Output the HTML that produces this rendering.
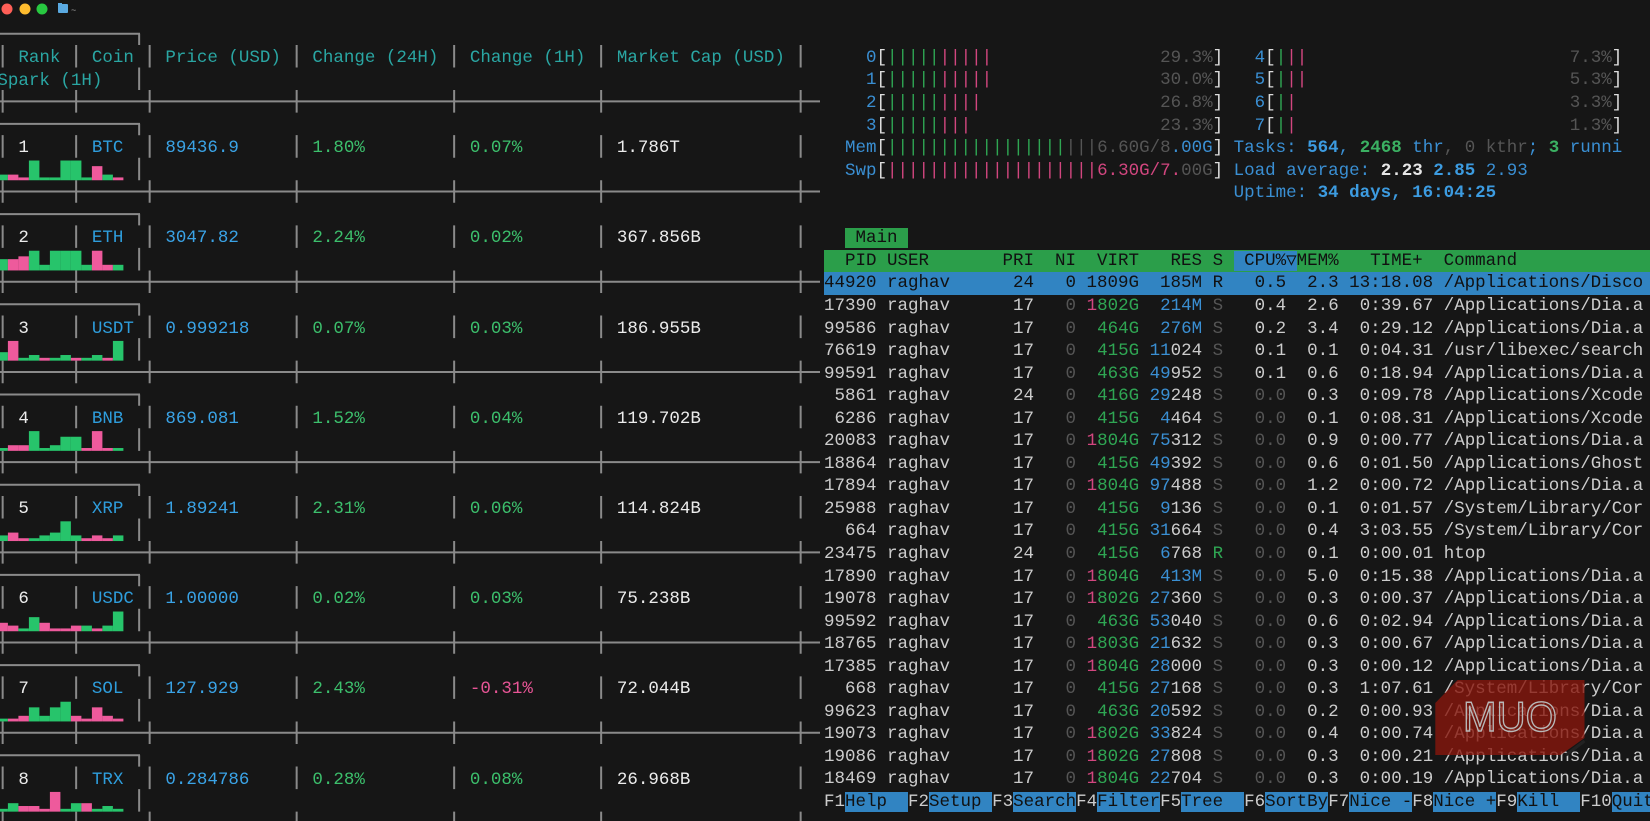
<!DOCTYPE html>
<html><head><meta charset="utf-8"><style>
*{margin:0;padding:0}
body{width:1650px;height:821px;background:#161616;overflow:hidden;position:relative;font-family:"Liberation Mono","DejaVu Sans Mono",monospace;font-size:17.5px}
.a{position:absolute;white-space:pre;line-height:22.55px;height:22.55px;transform:translateY(2px)}
.th{color:#2aa6a3}.cn{color:#2e9ddc}.pr{color:#3aa3e6}.gr{color:#3cbf6c}.rd{color:#e85596}.wh{color:#ececec}
#ht{position:absolute;left:824px;top:24.4px;width:826px;overflow:hidden;color:#cccccc}
#ht div{white-space:pre;height:22.55px;line-height:22.55px}
.g{color:#2fa653}.p{color:#d2467f}.b{color:#3a8fd3}.d{color:#555}.w{color:#e6e6e6}.k{color:#dcdcdc}
.bb{color:#3c9be0;font-weight:bold}.gb{color:#3bb062;font-weight:bold}
.hd{background:#2b9e4a;color:#111}
.hl{background:#3184c2}
.sel{background:#3184c2;color:#111}
.tab{background:#2b9e4a;color:#111}
.fk{background:#3184c2;color:#111}
</style></head><body>
<svg style="position:absolute;left:0;top:0" width="120" height="20">
<circle cx="7" cy="9" r="5.5" fill="#ff5f57"/><circle cx="25" cy="9" r="5.5" fill="#febc2e"/><circle cx="42" cy="9" r="5.5" fill="#28c840"/>
<rect x="58" y="4" width="10" height="9" rx="1" fill="#5aa9e0"/><rect x="58" y="3" width="4" height="2" fill="#5aa9e0"/>
<text x="71" y="13" font-size="9" fill="#999" font-family="Liberation Sans">~</text>
</svg>

<svg style="position:absolute;left:0;top:0" width="822" height="821">
<defs>
<g id="blk" stroke="#8a8a8a" stroke-width="2" fill="none">
<path d="M0 33.7H140M139.15 33.7v11.3M2.65 44.95v22.55M76.15 44.95v22.55M149.65 44.95v22.55M296.65 44.95v22.55M454.15 44.95v22.55M601.15 44.95v22.55M800.65 44.95v22.55M139.15 67.5v22.55M0 101.35H820M2.65 90.05v22.55M76.15 90.05v22.55M149.65 90.05v22.55M296.65 90.05v22.55M454.15 90.05v22.55M601.15 90.05v22.55M800.65 90.05v22.55"/>
</g>
</defs>
<use href="#blk"/>
<use href="#blk" transform="translate(0,90.2)"/>
<use href="#blk" transform="translate(0,180.4)"/>
<use href="#blk" transform="translate(0,270.6)"/>
<use href="#blk" transform="translate(0,360.8)"/>
<use href="#blk" transform="translate(0,451)"/>
<use href="#blk" transform="translate(0,541.2)"/>
<use href="#blk" transform="translate(0,631.4)"/>
<use href="#blk" transform="translate(0,721.6)"/>
<g>
<g transform="translate(0,180.25)">
<rect x="-2.6" y="-5.64" width="10.5" height="5.64" fill="#27c46b"/><rect x="7.9" y="-5.64" width="10.5" height="5.64" fill="#ee5a9c"/><rect x="18.4" y="-2.82" width="10.5" height="2.82" fill="#ee5a9c"/><rect x="28.9" y="-19.73" width="10.5" height="19.73" fill="#27c46b"/><rect x="39.4" y="-2.82" width="10.5" height="2.82" fill="#27c46b"/><rect x="49.9" y="-2.82" width="10.5" height="2.82" fill="#27c46b"/><rect x="60.4" y="-19.73" width="10.5" height="19.73" fill="#27c46b"/><rect x="70.9" y="-19.73" width="10.5" height="19.73" fill="#27c46b"/><rect x="81.4" y="-2.82" width="10.5" height="2.82" fill="#27c46b"/><rect x="91.9" y="-14.1" width="10.5" height="14.1" fill="#ee5a9c"/><rect x="102.4" y="-5.64" width="10.5" height="5.64" fill="#27c46b"/><rect x="112.9" y="-2.82" width="10.5" height="2.82" fill="#ee5a9c"/>
</g>
<g transform="translate(0,270.45)">
<rect x="-2.6" y="-11.28" width="10.5" height="11.28" fill="#27c46b"/><rect x="7.9" y="-11.28" width="10.5" height="11.28" fill="#ee5a9c"/><rect x="18.4" y="-14.1" width="10.5" height="14.1" fill="#ee5a9c"/><rect x="28.9" y="-19.73" width="10.5" height="19.73" fill="#27c46b"/><rect x="39.4" y="-5.64" width="10.5" height="5.64" fill="#27c46b"/><rect x="49.9" y="-19.73" width="10.5" height="19.73" fill="#27c46b"/><rect x="60.4" y="-19.73" width="10.5" height="19.73" fill="#27c46b"/><rect x="70.9" y="-19.73" width="10.5" height="19.73" fill="#27c46b"/><rect x="81.4" y="-5.64" width="10.5" height="5.64" fill="#27c46b"/><rect x="91.9" y="-19.73" width="10.5" height="19.73" fill="#ee5a9c"/><rect x="102.4" y="-5.64" width="10.5" height="5.64" fill="#ee5a9c"/><rect x="112.9" y="-5.64" width="10.5" height="5.64" fill="#27c46b"/>
</g>
<g transform="translate(0,360.65)">
<rect x="-2.6" y="-8.46" width="10.5" height="8.46" fill="#27c46b"/><rect x="7.9" y="-19.73" width="10.5" height="19.73" fill="#ee5a9c"/><rect x="18.4" y="-2.82" width="10.5" height="2.82" fill="#27c46b"/><rect x="28.9" y="-5.64" width="10.5" height="5.64" fill="#27c46b"/><rect x="39.4" y="-2.82" width="10.5" height="2.82" fill="#ee5a9c"/><rect x="49.9" y="-2.82" width="10.5" height="2.82" fill="#27c46b"/><rect x="60.4" y="-5.64" width="10.5" height="5.64" fill="#27c46b"/><rect x="70.9" y="-2.82" width="10.5" height="2.82" fill="#ee5a9c"/><rect x="81.4" y="-2.82" width="10.5" height="2.82" fill="#27c46b"/><rect x="91.9" y="-5.64" width="10.5" height="5.64" fill="#27c46b"/><rect x="102.4" y="-2.82" width="10.5" height="2.82" fill="#ee5a9c"/><rect x="112.9" y="-19.73" width="10.5" height="19.73" fill="#27c46b"/>
</g>
<g transform="translate(0,450.85)">
<rect x="-2.6" y="-2.82" width="10.5" height="2.82" fill="#27c46b"/><rect x="7.9" y="-5.64" width="10.5" height="5.64" fill="#ee5a9c"/><rect x="18.4" y="-5.64" width="10.5" height="5.64" fill="#ee5a9c"/><rect x="28.9" y="-19.73" width="10.5" height="19.73" fill="#27c46b"/><rect x="39.4" y="-2.82" width="10.5" height="2.82" fill="#27c46b"/><rect x="49.9" y="-5.64" width="10.5" height="5.64" fill="#27c46b"/><rect x="60.4" y="-14.1" width="10.5" height="14.1" fill="#27c46b"/><rect x="70.9" y="-14.1" width="10.5" height="14.1" fill="#27c46b"/><rect x="81.4" y="-2.82" width="10.5" height="2.82" fill="#ee5a9c"/><rect x="91.9" y="-19.73" width="10.5" height="19.73" fill="#ee5a9c"/><rect x="102.4" y="-2.82" width="10.5" height="2.82" fill="#ee5a9c"/><rect x="112.9" y="-2.82" width="10.5" height="2.82" fill="#27c46b"/>
</g>
<g transform="translate(0,541.05)">
<rect x="-2.6" y="-5.64" width="10.5" height="5.64" fill="#27c46b"/><rect x="7.9" y="-8.46" width="10.5" height="8.46" fill="#ee5a9c"/><rect x="18.4" y="-2.82" width="10.5" height="2.82" fill="#ee5a9c"/><rect x="28.9" y="-2.82" width="10.5" height="2.82" fill="#27c46b"/><rect x="39.4" y="-5.64" width="10.5" height="5.64" fill="#27c46b"/><rect x="49.9" y="-8.46" width="10.5" height="8.46" fill="#27c46b"/><rect x="60.4" y="-19.73" width="10.5" height="19.73" fill="#27c46b"/><rect x="70.9" y="-5.64" width="10.5" height="5.64" fill="#27c46b"/><rect x="81.4" y="-2.82" width="10.5" height="2.82" fill="#ee5a9c"/><rect x="91.9" y="-5.64" width="10.5" height="5.64" fill="#ee5a9c"/><rect x="102.4" y="-2.82" width="10.5" height="2.82" fill="#ee5a9c"/><rect x="112.9" y="-5.64" width="10.5" height="5.64" fill="#27c46b"/>
</g>
<g transform="translate(0,631.25)">
<rect x="-2.6" y="-8.46" width="10.5" height="8.46" fill="#ee5a9c"/><rect x="7.9" y="-5.64" width="10.5" height="5.64" fill="#ee5a9c"/><rect x="18.4" y="-2.82" width="10.5" height="2.82" fill="#27c46b"/><rect x="28.9" y="-14.1" width="10.5" height="14.1" fill="#27c46b"/><rect x="39.4" y="-8.46" width="10.5" height="8.46" fill="#ee5a9c"/><rect x="49.9" y="-2.82" width="10.5" height="2.82" fill="#ee5a9c"/><rect x="60.4" y="-2.82" width="10.5" height="2.82" fill="#ee5a9c"/><rect x="70.9" y="-5.64" width="10.5" height="5.64" fill="#ee5a9c"/><rect x="81.4" y="-5.64" width="10.5" height="5.64" fill="#27c46b"/><rect x="91.9" y="-2.82" width="10.5" height="2.82" fill="#ee5a9c"/><rect x="102.4" y="-5.64" width="10.5" height="5.64" fill="#27c46b"/><rect x="112.9" y="-19.73" width="10.5" height="19.73" fill="#27c46b"/>
</g>
<g transform="translate(0,721.45)">
<rect x="-2.6" y="-2.82" width="10.5" height="2.82" fill="#27c46b"/><rect x="7.9" y="-2.82" width="10.5" height="2.82" fill="#ee5a9c"/><rect x="18.4" y="-5.64" width="10.5" height="5.64" fill="#ee5a9c"/><rect x="28.9" y="-14.1" width="10.5" height="14.1" fill="#27c46b"/><rect x="39.4" y="-5.64" width="10.5" height="5.64" fill="#27c46b"/><rect x="49.9" y="-14.1" width="10.5" height="14.1" fill="#27c46b"/><rect x="60.4" y="-19.73" width="10.5" height="19.73" fill="#27c46b"/><rect x="70.9" y="-5.64" width="10.5" height="5.64" fill="#ee5a9c"/><rect x="81.4" y="-2.82" width="10.5" height="2.82" fill="#ee5a9c"/><rect x="91.9" y="-14.1" width="10.5" height="14.1" fill="#ee5a9c"/><rect x="102.4" y="-5.64" width="10.5" height="5.64" fill="#ee5a9c"/><rect x="112.9" y="-2.82" width="10.5" height="2.82" fill="#ee5a9c"/>
</g>
<g transform="translate(0,811.65)">
<rect x="-2.6" y="-2.82" width="10.5" height="2.82" fill="#27c46b"/><rect x="7.9" y="-8.46" width="10.5" height="8.46" fill="#27c46b"/><rect x="18.4" y="-5.64" width="10.5" height="5.64" fill="#ee5a9c"/><rect x="28.9" y="-5.64" width="10.5" height="5.64" fill="#ee5a9c"/><rect x="39.4" y="-2.82" width="10.5" height="2.82" fill="#ee5a9c"/><rect x="49.9" y="-19.73" width="10.5" height="19.73" fill="#ee5a9c"/><rect x="60.4" y="-2.82" width="10.5" height="2.82" fill="#27c46b"/><rect x="70.9" y="-8.46" width="10.5" height="8.46" fill="#27c46b"/><rect x="81.4" y="-8.46" width="10.5" height="8.46" fill="#ee5a9c"/><rect x="91.9" y="-2.82" width="10.5" height="2.82" fill="#27c46b"/><rect x="102.4" y="-5.64" width="10.5" height="5.64" fill="#27c46b"/><rect x="112.9" y="-2.82" width="10.5" height="2.82" fill="#27c46b"/>
</g>
</g>
</svg>

<div class="a th" style="left:18.4px;top:44.95px">Rank</div>
<div class="a th" style="left:91.9px;top:44.95px">Coin</div>
<div class="a th" style="left:165.4px;top:44.95px">Price (USD)</div>
<div class="a th" style="left:312.4px;top:44.95px">Change (24H)</div>
<div class="a th" style="left:469.9px;top:44.95px">Change (1H)</div>
<div class="a th" style="left:616.9px;top:44.95px">Market Cap (USD)</div>
<div class="a th" style="left:-2.6px;top:67.5px">Spark (1H)</div>

<div class="a wh" style="left:18.4px;top:135.15px">1</div><div class="a cn" style="left:91.9px;top:135.15px">BTC</div><div class="a pr" style="left:165.4px;top:135.15px">89436.9</div><div class="a gr" style="left:312.4px;top:135.15px">1.80%</div><div class="a gr" style="left:469.9px;top:135.15px">0.07%</div><div class="a wh" style="left:616.9px;top:135.15px">1.786T</div>
<div class="a wh" style="left:18.4px;top:225.35px">2</div><div class="a cn" style="left:91.9px;top:225.35px">ETH</div><div class="a pr" style="left:165.4px;top:225.35px">3047.82</div><div class="a gr" style="left:312.4px;top:225.35px">2.24%</div><div class="a gr" style="left:469.9px;top:225.35px">0.02%</div><div class="a wh" style="left:616.9px;top:225.35px">367.856B</div>
<div class="a wh" style="left:18.4px;top:315.55px">3</div><div class="a cn" style="left:91.9px;top:315.55px">USDT</div><div class="a pr" style="left:165.4px;top:315.55px">0.999218</div><div class="a gr" style="left:312.4px;top:315.55px">0.07%</div><div class="a gr" style="left:469.9px;top:315.55px">0.03%</div><div class="a wh" style="left:616.9px;top:315.55px">186.955B</div>
<div class="a wh" style="left:18.4px;top:405.75px">4</div><div class="a cn" style="left:91.9px;top:405.75px">BNB</div><div class="a pr" style="left:165.4px;top:405.75px">869.081</div><div class="a gr" style="left:312.4px;top:405.75px">1.52%</div><div class="a gr" style="left:469.9px;top:405.75px">0.04%</div><div class="a wh" style="left:616.9px;top:405.75px">119.702B</div>
<div class="a wh" style="left:18.4px;top:495.95px">5</div><div class="a cn" style="left:91.9px;top:495.95px">XRP</div><div class="a pr" style="left:165.4px;top:495.95px">1.89241</div><div class="a gr" style="left:312.4px;top:495.95px">2.31%</div><div class="a gr" style="left:469.9px;top:495.95px">0.06%</div><div class="a wh" style="left:616.9px;top:495.95px">114.824B</div>
<div class="a wh" style="left:18.4px;top:586.15px">6</div><div class="a cn" style="left:91.9px;top:586.15px">USDC</div><div class="a pr" style="left:165.4px;top:586.15px">1.00000</div><div class="a gr" style="left:312.4px;top:586.15px">0.02%</div><div class="a gr" style="left:469.9px;top:586.15px">0.03%</div><div class="a wh" style="left:616.9px;top:586.15px">75.238B</div>
<div class="a wh" style="left:18.4px;top:676.35px">7</div><div class="a cn" style="left:91.9px;top:676.35px">SOL</div><div class="a pr" style="left:165.4px;top:676.35px">127.929</div><div class="a gr" style="left:312.4px;top:676.35px">2.43%</div><div class="a rd" style="left:469.9px;top:676.35px">-0.31%</div><div class="a wh" style="left:616.9px;top:676.35px">72.044B</div>
<div class="a wh" style="left:18.4px;top:766.55px">8</div><div class="a cn" style="left:91.9px;top:766.55px">TRX</div><div class="a pr" style="left:165.4px;top:766.55px">0.284786</div><div class="a gr" style="left:312.4px;top:766.55px">0.28%</div><div class="a gr" style="left:469.9px;top:766.55px">0.08%</div><div class="a wh" style="left:616.9px;top:766.55px">26.968B</div>

<div id="ht">
<div> </div>
<div>    <span class="b">0</span><span class="k">[</span><span class="g">|||||</span><span class="p">|||||</span>                <span class="d">29.3%</span><span class="k">]</span>   <span class="b">4</span><span class="k">[</span><span class="g">|</span><span class="p">||</span>                         <span class="d">7.3%</span><span class="k">]</span></div>
<div>    <span class="b">1</span><span class="k">[</span><span class="g">|||||</span><span class="p">|||||</span>                <span class="d">30.0%</span><span class="k">]</span>   <span class="b">5</span><span class="k">[</span><span class="g">|</span><span class="p">||</span>                         <span class="d">5.3%</span><span class="k">]</span></div>
<div>    <span class="b">2</span><span class="k">[</span><span class="g">|||||</span><span class="p">||||</span>                 <span class="d">26.8%</span><span class="k">]</span>   <span class="b">6</span><span class="k">[</span><span class="g">|</span><span class="p">|</span>                          <span class="d">3.3%</span><span class="k">]</span></div>
<div>    <span class="b">3</span><span class="k">[</span><span class="g">|||||</span><span class="p">|||</span>                  <span class="d">23.3%</span><span class="k">]</span>   <span class="b">7</span><span class="k">[</span><span class="g">|</span><span class="p">|</span>                          <span class="d">1.3%</span><span class="k">]</span></div>
<div>  <span class="b">Mem</span><span class="k">[</span><span class="g">|||||||||||||||||</span><span class="d">|||6.60G/8</span><span class="b">.00G</span><span class="k">]</span> <span class="b">Tasks: </span><span class="bb">564</span><span class="b">, </span><span class="gb">2468</span><span class="b"> thr</span><span class="d">, 0 kthr</span><span class="b">; </span><span class="gb">3</span><span class="b"> runni</span></div>
<div>  <span class="b">Swp</span><span class="k">[</span><span class="p">||||||||||||||||||||6.30G/7.</span><span class="d">00G</span><span class="k">]</span> <span class="b">Load average: </span><span class="w" style="font-weight:bold">2.23 </span><span class="bb">2.85 </span><span class="b">2.93</span></div>
<div>                                       <span class="b">Uptime: </span><span class="bb">34 days, 16:04:25</span></div>
<div> </div>
<div>  <span class="tab"> Main </span></div>
<div class="hd">  PID USER       PRI  NI  VIRT   RES S <span class="hl"> CPU%▽</span>MEM%   TIME+  Command</div>
<div class="sel">44920 raghav      24   0 1809G  185M R   0.5  2.3 13:18.08 /Applications/Disco</div>
<div>17390 raghav      17 <span class="d">  0</span> <span class="p">1</span><span class="g">802G</span>  <span class="b">214M</span> <span class="d">S</span>   0.4  2.6  0:39.67 /Applications/Dia.a</div>
<div>99586 raghav      17 <span class="d">  0</span>  <span class="g">464G</span>  <span class="b">276M</span> <span class="d">S</span>   0.2  3.4  0:29.12 /Applications/Dia.a</div>
<div>76619 raghav      17 <span class="d">  0</span>  <span class="g">415G</span> <span class="b">11</span>024 <span class="d">S</span>   0.1  0.1  0:04.31 /usr/libexec/search</div>
<div>99591 raghav      17 <span class="d">  0</span>  <span class="g">463G</span> <span class="b">49</span>952 <span class="d">S</span>   0.1  0.6  0:18.94 /Applications/Dia.a</div>
<div> 5861 raghav      24 <span class="d">  0</span>  <span class="g">416G</span> <span class="b">29</span>248 <span class="d">S   0.0</span>  0.3  0:09.78 /Applications/Xcode</div>
<div> 6286 raghav      17 <span class="d">  0</span>  <span class="g">415G</span>  <span class="b">4</span>464 <span class="d">S   0.0</span>  0.1  0:08.31 /Applications/Xcode</div>
<div>20083 raghav      17 <span class="d">  0</span> <span class="p">1</span><span class="g">804G</span> <span class="b">75</span>312 <span class="d">S   0.0</span>  0.9  0:00.77 /Applications/Dia.a</div>
<div>18864 raghav      17 <span class="d">  0</span>  <span class="g">415G</span> <span class="b">49</span>392 <span class="d">S   0.0</span>  0.6  0:01.50 /Applications/Ghost</div>
<div>17894 raghav      17 <span class="d">  0</span> <span class="p">1</span><span class="g">804G</span> <span class="b">97</span>488 <span class="d">S   0.0</span>  1.2  0:00.72 /Applications/Dia.a</div>
<div>25988 raghav      17 <span class="d">  0</span>  <span class="g">415G</span>  <span class="b">9</span>136 <span class="d">S   0.0</span>  0.1  0:01.57 /System/Library/Cor</div>
<div>  664 raghav      17 <span class="d">  0</span>  <span class="g">415G</span> <span class="b">31</span>664 <span class="d">S   0.0</span>  0.4  3:03.55 /System/Library/Cor</div>
<div>23475 raghav      24 <span class="d">  0</span>  <span class="g">415G</span>  <span class="b">6</span>768 <span class="g">R</span> <span class="d">  0.0</span>  0.1  0:00.01 htop</div>
<div>17890 raghav      17 <span class="d">  0</span> <span class="p">1</span><span class="g">804G</span>  <span class="b">413M</span> <span class="d">S   0.0</span>  5.0  0:15.38 /Applications/Dia.a</div>
<div>19078 raghav      17 <span class="d">  0</span> <span class="p">1</span><span class="g">802G</span> <span class="b">27</span>360 <span class="d">S   0.0</span>  0.3  0:00.37 /Applications/Dia.a</div>
<div>99592 raghav      17 <span class="d">  0</span>  <span class="g">463G</span> <span class="b">53</span>040 <span class="d">S   0.0</span>  0.6  0:02.94 /Applications/Dia.a</div>
<div>18765 raghav      17 <span class="d">  0</span> <span class="p">1</span><span class="g">803G</span> <span class="b">21</span>632 <span class="d">S   0.0</span>  0.3  0:00.67 /Applications/Dia.a</div>
<div>17385 raghav      17 <span class="d">  0</span> <span class="p">1</span><span class="g">804G</span> <span class="b">28</span>000 <span class="d">S   0.0</span>  0.3  0:00.12 /Applications/Dia.a</div>
<div>  668 raghav      17 <span class="d">  0</span>  <span class="g">415G</span> <span class="b">27</span>168 <span class="d">S   0.0</span>  0.3  1:07.61 /System/Library/Cor</div>
<div>99623 raghav      17 <span class="d">  0</span>  <span class="g">463G</span> <span class="b">20</span>592 <span class="d">S   0.0</span>  0.2  0:00.93 /Applications/Dia.a</div>
<div>19073 raghav      17 <span class="d">  0</span> <span class="p">1</span><span class="g">802G</span> <span class="b">33</span>824 <span class="d">S   0.0</span>  0.4  0:00.74 /Applications/Dia.a</div>
<div>19086 raghav      17 <span class="d">  0</span> <span class="p">1</span><span class="g">802G</span> <span class="b">27</span>808 <span class="d">S   0.0</span>  0.3  0:00.21 /Applications/Dia.a</div>
<div>18469 raghav      17 <span class="d">  0</span> <span class="p">1</span><span class="g">804G</span> <span class="b">22</span>704 <span class="d">S   0.0</span>  0.3  0:00.19 /Applications/Dia.a</div>
<div>F1<span class="fk">Help  </span>F2<span class="fk">Setup </span>F3<span class="fk">Search</span>F4<span class="fk">Filter</span>F5<span class="fk">Tree  </span>F6<span class="fk">SortBy</span>F7<span class="fk">Nice -</span>F8<span class="fk">Nice +</span>F9<span class="fk">Kill  </span>F10<span class="fk">Quit  </span></div>
</div>

<svg style="position:absolute;left:0;top:0" width="1650" height="821">
<polygon points="1457.6,680 1584.5,680 1584.5,738 1560.6,755 1435.3,755 1435.3,703" fill="rgba(135,22,12,0.8)"/>
<path d="M1566 755L1584.5 741" stroke="#222" stroke-width="3"/>
<text x="1463" y="731" font-family="Liberation Sans" font-size="42" fill="none" stroke="#b8b8b8" stroke-width="1.4" textLength="94" lengthAdjust="spacingAndGlyphs">MUO</text>
</svg>
</body></html>
